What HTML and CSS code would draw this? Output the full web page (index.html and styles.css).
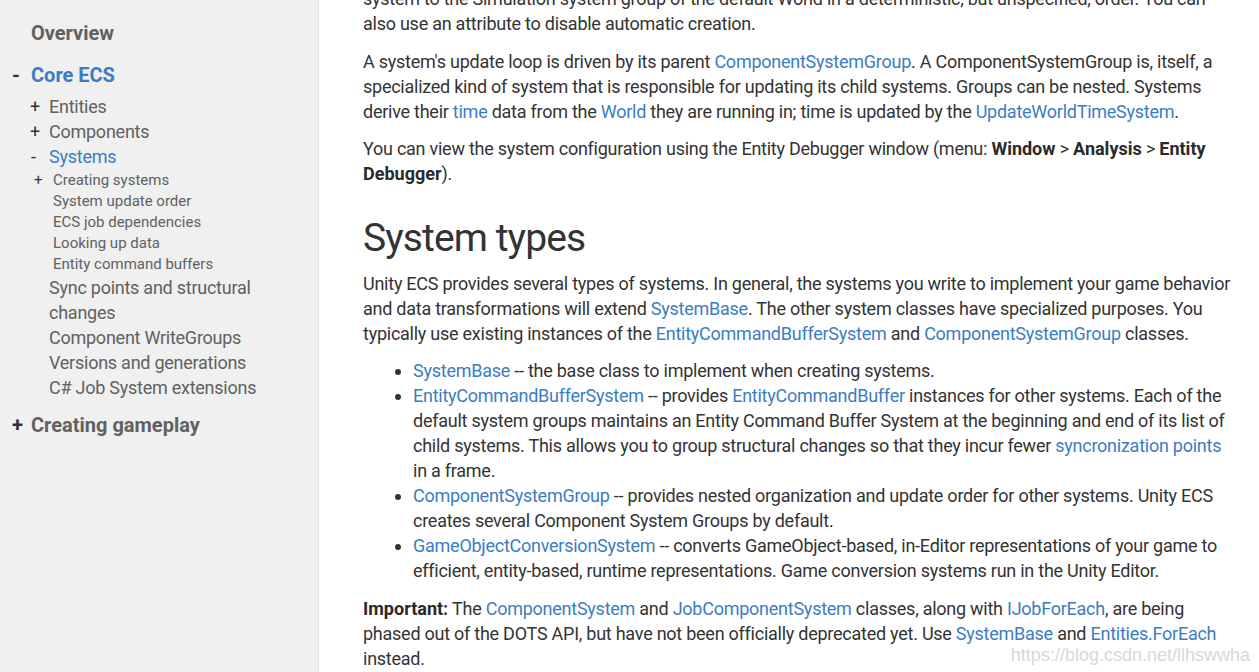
FILE: index.html
```html
<!DOCTYPE html>
<html>
<head>
<meta charset="utf-8">
<link rel="stylesheet" href="styles.css">
</head>
<body>
<div class="page">
  <nav class="sidebar">
    <ul class="nav">
      <li class="lvl1"><div class="row"><span class="tg"></span><a class="t">Overview</a></div></li>
      <li class="lvl1 open">
        <div class="row"><span class="tg">-</span><a class="t active">Core ECS</a></div>
        <ul class="sub">
          <li class="lvl2"><div class="row"><span class="tg">+</span><a class="t">Entities</a></div></li>
          <li class="lvl2"><div class="row"><span class="tg">+</span><a class="t">Components</a></div></li>
          <li class="lvl2">
            <div class="row"><span class="tg minus">-</span><a class="t active">Systems</a></div>
            <ul class="subsub">
              <li class="lvl3"><div class="row"><span class="tg">+</span><a class="t">Creating systems</a></div></li>
              <li class="lvl3"><div class="row"><span class="tg"></span><a class="t">System update order</a></div></li>
              <li class="lvl3"><div class="row"><span class="tg"></span><a class="t">ECS job dependencies</a></div></li>
              <li class="lvl3"><div class="row"><span class="tg"></span><a class="t">Looking up data</a></div></li>
              <li class="lvl3"><div class="row"><span class="tg"></span><a class="t">Entity command buffers</a></div></li>
            </ul>
          </li>
          <li class="lvl2"><div class="row"><span class="tg"></span><a class="t">Sync points and structural changes</a></div></li>
          <li class="lvl2"><div class="row"><span class="tg"></span><a class="t">Component WriteGroups</a></div></li>
          <li class="lvl2"><div class="row"><span class="tg"></span><a class="t">Versions and generations</a></div></li>
          <li class="lvl2"><div class="row"><span class="tg"></span><a class="t">C# Job System extensions</a></div></li>
        </ul>
      </li>
      <li class="lvl1"><div class="row"><span class="tg">+</span><a class="t">Creating gameplay</a></div></li>
    </ul>
  </nav>
  <main class="content">
    <p class="first">system to the Simulation system group of the default World in a deterministic, but unspecified, order. You can also use an attribute to disable automatic creation.</p>
    <p>A system's update loop is driven by its parent <a>ComponentSystemGroup</a>. A ComponentSystemGroup is, itself, a specialized kind of system that is responsible for updating its child systems. Groups can be nested. Systems derive their <a>time</a> data from the <a>World</a> they are running in; time is updated by the <a>UpdateWorldTimeSystem</a>.</p>
    <p>You can view the system configuration using the Entity Debugger window (menu: <b>Window</b> &gt; <b>Analysis</b> &gt; <b>Entity Debugger</b>).</p>
    <h1>System types</h1>
    <p>Unity ECS provides several types of systems. In general, the systems you write to implement your game behavior and data transformations will extend <a>SystemBase</a>. The other system classes have specialized purposes. You typically use existing instances of the <a>EntityCommandBufferSystem</a> and <a>ComponentSystemGroup</a> classes.</p>
    <ul class="list">
      <li><a>SystemBase</a> -- the base class to implement when creating systems.</li>
      <li><a>EntityCommandBufferSystem</a> -- provides <a>EntityCommandBuffer</a> instances for other systems. Each of the default system groups maintains an Entity Command Buffer System at the beginning and end of its list of child systems. This allows you to group structural changes so that they incur fewer <a>syncronization points</a> in a frame.</li>
      <li><a>ComponentSystemGroup</a> -- provides nested organization and update order for other systems. Unity ECS creates several Component System Groups by default.</li>
      <li><a>GameObjectConversionSystem</a> -- converts GameObject-based, in-Editor representations of your game to efficient, entity-based, runtime representations. Game conversion systems run in the Unity Editor.</li>
    </ul>
    <p><b>Important:</b> The <a>ComponentSystem</a> and <a>JobComponentSystem</a> classes, along with <a>IJobForEach</a>, are being phased out of the DOTS API, but have not been officially deprecated yet. Use <a>SystemBase</a> and <a>Entities.ForEach</a> instead.</p>
  </main>
</div>
<div class="watermark">https://blog.csdn.net/llhswwha</div>
</body>
</html>
```
FILE: styles.css
```css
html, body {
  margin: 0;
  padding: 0;
  height: 100%;
  overflow: hidden;
  background: #ffffff;
}
body {
  font-family: Roboto, "Noto Sans", sans-serif;
  color: #333333;
  position: relative;
}
a { color: #3b7dc4; text-decoration: none; }
.page {
  display: flex;
  height: 672px;
}
.sidebar {
  width: 298px;
  flex: 0 0 298px;
  padding: 19px 20px 0 0;
  background: #f0f0f0;
  border-right: 1px solid #e2e2e2;
}
.nav, .sub, .subsub {
  list-style: none;
  margin: 0;
  padding: 0;
}
.row {
  display: flex;
  align-items: flex-start;
}
.tg {
  flex: 0 0 19px;
  width: 19px;
  color: #333333;
}
.t { color: #616161; }
.t.active { color: #3b7dc4; }
.lvl1 { margin-bottom: 13px; }
.lvl1.open { margin-bottom: 11px; }
.lvl1 > .row {
  padding-left: 12px;
  font-size: 20px;
  line-height: 28px;
  font-weight: 700;
}
.lvl1.open > .row { padding-top: 1px; }
.sub { margin-top: 5px; }
.lvl2 > .row {
  padding-left: 30px;
  font-size: 18px;
  line-height: 25px;
  letter-spacing: -0.25px;
}
.lvl2 > .row .tg.minus { padding-left: 1px; flex-basis: 18px; }
.subsub { margin-top: 1px; }
.lvl3 > .row {
  padding-left: 34px;
  font-size: 15px;
  line-height: 21px;
  letter-spacing: 0;
}
.content {
  flex: 1;
  min-width: 0;
  padding: 0 24px 0 44px;
  margin-top: -14px;
  font-size: 18px;
  line-height: 25px;
  letter-spacing: -0.25px;
}
.content p { margin: 12px 0; }
.content p.first { margin-top: 0; margin-bottom: 13px; }
.content b { font-weight: 700; color: #2a2a2a; letter-spacing: 0; }
.content h1 {
  font-size: 39px;
  line-height: 41px;
  font-weight: 400;
  margin: 32px 0 12px;
  color: #333333;
  letter-spacing: -0.9px;
}
.list {
  margin: 12px 0 13px;
  padding-left: 50px;
}
.watermark {
  position: absolute;
  right: 9px;
  bottom: 6px;
  font-family: "Liberation Sans", Arial, sans-serif;
  font-size: 18px;
  line-height: 22px;
  color: #d8d8d8;
  text-shadow: 0 0 1px #ffffff;
}
```
